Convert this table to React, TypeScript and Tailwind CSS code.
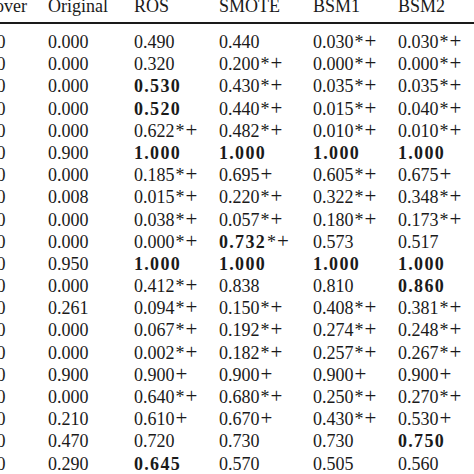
const rows: string[][] = [
  ["0.000", "0.000", "0.490", "0.440", "0.030*+", "0.030*+"],
  ["0.000", "0.000", "0.320", "0.200*+", "0.000*+", "0.000*+"],
  ["0.000", "0.000", "!0.530", "0.430*+", "0.035*+", "0.035*+"],
  ["0.000", "0.000", "!0.520", "0.440*+", "0.015*+", "0.040*+"],
  ["0.000", "0.000", "0.622*+", "0.482*+", "0.010*+", "0.010*+"],
  ["0.000", "0.900", "!1.000", "!1.000", "!1.000", "!1.000"],
  ["0.000", "0.000", "0.185*+", "0.695+", "0.605*+", "0.675+"],
  ["0.000", "0.008", "0.015*+", "0.220*+", "0.322*+", "0.348*+"],
  ["0.000", "0.000", "0.038*+", "0.057*+", "0.180*+", "0.173*+"],
  ["0.000", "0.000", "0.000*+", "!0.732*+", "0.573", "0.517"],
  ["0.000", "0.950", "!1.000", "!1.000", "!1.000", "!1.000"],
  ["0.000", "0.000", "0.412*+", "0.838", "0.810", "!0.860"],
  ["0.000", "0.261", "0.094*+", "0.150*+", "0.408*+", "0.381*+"],
  ["0.000", "0.000", "0.067*+", "0.192*+", "0.274*+", "0.248*+"],
  ["0.000", "0.000", "0.002*+", "0.182*+", "0.257*+", "0.267*+"],
  ["0.000", "0.900", "0.900+", "0.900+", "0.900+", "0.900+"],
  ["0.000", "0.000", "0.640*+", "0.680*+", "0.250*+", "0.270*+"],
  ["0.000", "0.210", "0.610+", "0.670+", "0.430*+", "0.530+"],
  ["0.000", "0.470", "0.720", "0.730", "0.730", "!0.750"],
  ["0.000", "0.290", "!0.645", "0.570", "0.505", "0.560"],
];

const headers = ["Leftover", "Original", "ROS", "SMOTE", "BSM1", "BSM2"];

// column widths; first column starts left of the viewport and is clipped
const widths = ["w-[83px] -ml-[35px]", "w-[86px]", "w-[85px]", "w-[94px]", "w-[85px]", "flex-1"];

function Cell({ value }: { value: string }) {
  const bold = value.startsWith("!");
  const v = bold ? value.slice(1) : value;
  const num = v.slice(0, 5);
  const rest = v.slice(5);
  return (
    <span className="whitespace-nowrap">
      <span className={bold ? "font-bold tracking-[1.3px]" : ""}>{num}</span>
      {rest.includes("*") && <span className="ml-[1px]">*</span>}
      {rest.includes("+") && <span className="ml-[1px] text-[21px] leading-none">+</span>}
    </span>
  );
}

export default function App() {
  return (
    <div
      className="w-[474px] h-[474px] overflow-hidden bg-white text-[#1a1a1a] text-[18px]"
      style={{ fontFamily: '"Liberation Serif", "Times New Roman", serif' }}
    >
      <div className="flex h-[12px] leading-[12px]">
        {headers.map((h, i) => (
          <div key={h} className={`${widths[i]} shrink-0`}>
            {h}
          </div>
        ))}
      </div>
      <div className="mt-[10px] h-[2px] bg-[#1a1a1a]" />
      <div className="pt-[7px]">
        {rows.map((r, ri) => (
          <div key={ri} className="flex h-[22.2px] leading-[22px]">
            {r.map((c, ci) => (
              <div key={ci} className={`${widths[ci]} shrink-0`}>
                <Cell value={c} />
              </div>
            ))}
          </div>
        ))}
      </div>
    </div>
  );
}
